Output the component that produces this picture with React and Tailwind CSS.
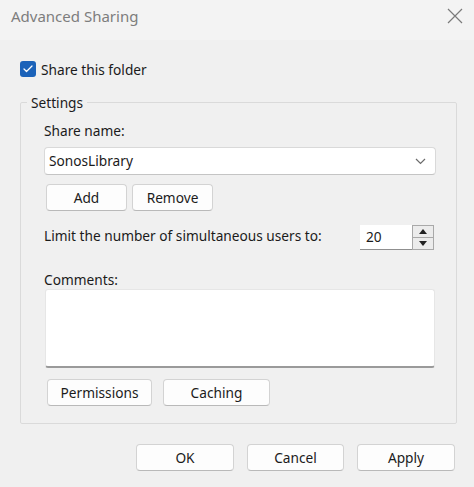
import { Check } from "lucide-react";

const font = "font-['Noto_Sans','Open_Sans',sans-serif]";

function DialogButton({ children, className = "" }) {
  return (
    <button
      type="button"
      className={`flex h-[27px] items-center justify-center rounded-[4px] border border-[#d3d3d3] border-b-[#b9b9b9] bg-[#fdfdfd] text-[13.7px] leading-[19px] text-[#1b1b1b] ${className}`}
    >
      {children}
    </button>
  );
}

function Spinner({ value }) {
  return (
    <div className="flex h-[25px]">
      <div className="flex w-[52px] items-center border-b border-b-[#8f8f8f] bg-white pl-[6px] text-[13.7px] text-[#1b1b1b]">
        {value}
      </div>
      <div className="flex w-[22px] flex-col border border-[#a9a9a9] bg-[#ececec]">
        <div className="flex flex-1 items-center justify-center border-b border-[#a9a9a9]">
          <svg width="8" height="5" viewBox="0 0 8 5">
            <path d="M0 5 L4 0 L8 5 Z" fill="#222" />
          </svg>
        </div>
        <div className="flex flex-1 items-center justify-center">
          <svg width="8" height="5" viewBox="0 0 8 5">
            <path d="M0 0 L4 5 L8 0 Z" fill="#222" />
          </svg>
        </div>
      </div>
    </div>
  );
}

export default function App() {
  return (
    <div className={`${font} flex h-[487px] w-[474px] flex-col bg-[#f0f0f0] text-[#1b1b1b]`}>
      {/* title bar */}
      <div className="flex h-[40px] items-start justify-between bg-[#f3f3f3] pl-[11px] pr-[11px] pt-[6px]">
        <span className="text-[15px] leading-[21px] text-[#7d7d7d]">Advanced Sharing</span>
        <svg width="16" height="16" viewBox="0 0 16 16" className="mt-[2px]">
          <path d="M1 1 L15 15 M15 1 L1 15" stroke="#7a7a7a" strokeWidth="1.2" />
        </svg>
      </div>

      <label className="mt-[19px] flex h-[20px] items-center pl-[20px]">
        <span className="flex h-[16px] w-[16px] items-center justify-center rounded-[3px] bg-[#1b62b9]">
          <Check size={12} strokeWidth={2.5} color="#fff" />
        </span>
        <span className="ml-[5px] text-[13.7px] leading-[19px]">Share this folder</span>
      </label>

      <fieldset className="ml-[20px] mt-[14px] w-[437px] rounded-[2px] border border-[#dadada] pb-[17px]">
        <legend className="ml-[6px] px-[4px] text-[13.7px] leading-[19px]">Settings</legend>
        <div className="flex flex-col pl-[23px] pt-[9px]">
          <div className="text-[13.7px] leading-[19px]">Share name:</div>
          <div className="mt-[7px] flex h-[28px] w-[392px] items-center justify-between rounded-[4px] border border-[#d9d9d9] border-b-[#c4c4c4] bg-white pl-[4px] pr-[9px]">
            <span className="text-[13.7px]">SonosLibrary</span>
            <svg width="11" height="7" viewBox="0 0 11 7">
              <path d="M1 1 L5.5 5.5 L10 1" fill="none" stroke="#6b6b6b" strokeWidth="1.2" />
            </svg>
          </div>
          <div className="ml-[2px] mt-[9px] flex gap-[5px]">
            <DialogButton className="w-[81px]">Add</DialogButton>
            <DialogButton className="w-[81px]">Remove</DialogButton>
          </div>
          <div className="mt-[14px] flex w-[390px] items-start justify-between">
            <span className="mt-[1px] text-[13.7px] leading-[19px]">
              Limit the number of simultaneous users to:
            </span>
            <Spinner value="20" />
          </div>
          <div className="mt-[20px] text-[13.7px] leading-[19px]">Comments:</div>
          <div className="ml-[1px] h-[79px] w-[390px] rounded-[3px] border border-[#e6e6e6] border-b-2 border-b-[#9a9a9a] bg-white" />
          <div className="ml-[3px] mt-[11px] flex gap-[11px]">
            <DialogButton className="w-[105px]">Permissions</DialogButton>
            <DialogButton className="w-[107px]">Caching</DialogButton>
          </div>
        </div>
      </fieldset>

      <div className="mt-[20px] flex justify-end gap-[13px] pr-[19px]">
        <DialogButton className="w-[98px]">OK</DialogButton>
        <DialogButton className="w-[97px]">Cancel</DialogButton>
        <DialogButton className="w-[98px]">Apply</DialogButton>
      </div>
    </div>
  );
}
